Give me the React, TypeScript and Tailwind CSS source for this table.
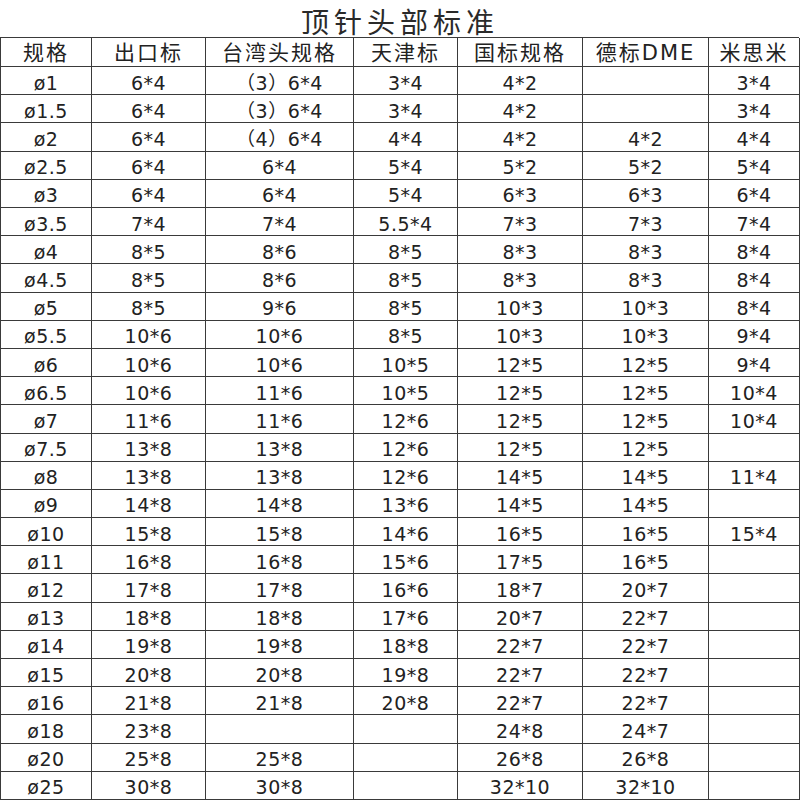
import { Fragment } from 'react'

const headers = ['规格', '出口标', '台湾头规格', '天津标', '国标规格', '德标DME', '米思米']

const rows: string[][] = [
  ['ø1', '6*4', '（3）6*4', '3*4', '4*2', '', '3*4'],
  ['ø1.5', '6*4', '（3）6*4', '3*4', '4*2', '', '3*4'],
  ['ø2', '6*4', '（4）6*4', '4*4', '4*2', '4*2', '4*4'],
  ['ø2.5', '6*4', '6*4', '5*4', '5*2', '5*2', '5*4'],
  ['ø3', '6*4', '6*4', '5*4', '6*3', '6*3', '6*4'],
  ['ø3.5', '7*4', '7*4', '5.5*4', '7*3', '7*3', '7*4'],
  ['ø4', '8*5', '8*6', '8*5', '8*3', '8*3', '8*4'],
  ['ø4.5', '8*5', '8*6', '8*5', '8*3', '8*3', '8*4'],
  ['ø5', '8*5', '9*6', '8*5', '10*3', '10*3', '8*4'],
  ['ø5.5', '10*6', '10*6', '8*5', '10*3', '10*3', '9*4'],
  ['ø6', '10*6', '10*6', '10*5', '12*5', '12*5', '9*4'],
  ['ø6.5', '10*6', '11*6', '10*5', '12*5', '12*5', '10*4'],
  ['ø7', '11*6', '11*6', '12*6', '12*5', '12*5', '10*4'],
  ['ø7.5', '13*8', '13*8', '12*6', '12*5', '12*5', ''],
  ['ø8', '13*8', '13*8', '12*6', '14*5', '14*5', '11*4'],
  ['ø9', '14*8', '14*8', '13*6', '14*5', '14*5', ''],
  ['ø10', '15*8', '15*8', '14*6', '16*5', '16*5', '15*4'],
  ['ø11', '16*8', '16*8', '15*6', '17*5', '16*5', ''],
  ['ø12', '17*8', '17*8', '16*6', '18*7', '20*7', ''],
  ['ø13', '18*8', '18*8', '17*6', '20*7', '22*7', ''],
  ['ø14', '19*8', '19*8', '18*8', '22*7', '22*7', ''],
  ['ø15', '20*8', '20*8', '19*8', '22*7', '22*7', ''],
  ['ø16', '21*8', '21*8', '20*8', '22*7', '22*7', ''],
  ['ø18', '23*8', '', '', '24*8', '24*7', ''],
  ['ø20', '25*8', '25*8', '', '26*8', '26*8', ''],
  ['ø25', '30*8', '30*8', '', '32*10', '32*10', ''],
]

export default function App() {
  return (
    <div className="h-[800px] w-[800px] overflow-hidden bg-white text-[#222] [font-family:'DejaVu_Sans','Noto_Sans_CJK_SC',sans-serif]">
      <div className="flex h-[37px] items-center justify-center pt-[5px] text-[28px] tracking-[5px] text-[#2a2a2a] [font-family:'Noto_Sans_CJK_SC',sans-serif]">
        顶针头部标准
      </div>
      <div className="grid h-[763px] w-[799px] grid-cols-[91px_114px_148px_104px_125px_126px_91px] grid-rows-[29px_repeat(26,minmax(0,1fr))] border-l border-t border-[#3a3a3a]">
        {headers.map((h) => (
          <div
            key={h}
            className="flex items-center justify-center border-b border-r border-[#3a3a3a] pt-[4px] text-[21px] tracking-[2px]"
          >
            {h}
          </div>
        ))}
        {rows.map((row) => (
          <Fragment key={row[0]}>
            {row.map((cell, i) => (
              <div
                key={i}
                className="flex items-center justify-center border-b border-r border-[#3a3a3a] pt-[5px] text-[19px] leading-none tracking-[0.5px]"
              >
                {cell}
              </div>
            ))}
          </Fragment>
        ))}
      </div>
    </div>
  )
}
